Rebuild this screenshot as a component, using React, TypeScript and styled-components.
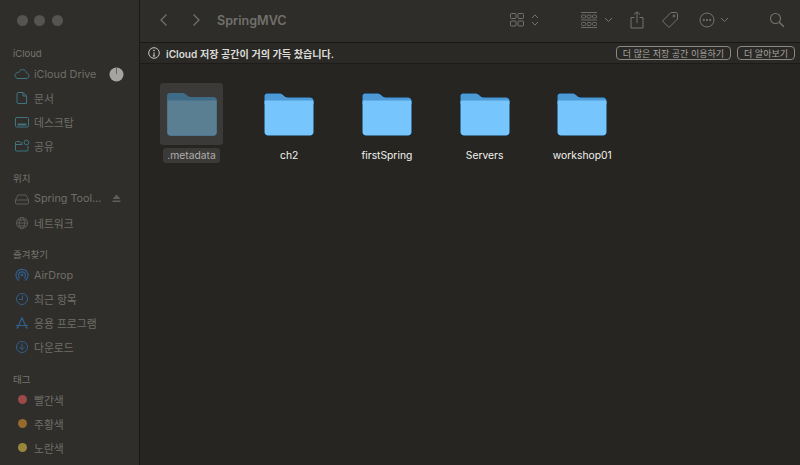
import * as React from 'react';
import styled, { createGlobalStyle } from 'styled-components';

const FONT = `Inter, "Noto Sans CJK KR", "Liberation Sans", sans-serif`;

const Global = createGlobalStyle`
  html, body { margin: 0; padding: 0; background: #262521; }
  body { font-family: ${FONT}; overflow: hidden; }
  * { box-sizing: border-box; }
`;

const Window = styled.div`
  display: flex;
  width: 800px;
  height: 465px;
  overflow: hidden;
  background: #262521;
`;

const Sidebar = styled.aside`
  width: 140px;
  flex-shrink: 0;
  height: 465px;
  background: #2f2e2b;
  border-right: 1px solid #191816;
  padding: 15px 0 0 13px;
  overflow: hidden;
`;

const Lights = styled.div`
  display: flex;
  gap: 6.5px;
  padding-left: 3.5px;
  margin-bottom: 21px;
`;

const Light = styled.span`
  width: 11px;
  height: 11px;
  border-radius: 50%;
  background: #555450;
`;

const Section = styled.section`
  margin-bottom: 13.6px;
`;

const SectionTitle = styled.div`
  height: 14px;
  line-height: 14px;
  font-size: 9.5px;
  font-weight: 400;
  color: #77766f;
  margin-bottom: 1px;
`;

const Row = styled.div`
  display: flex;
  align-items: center;
  height: 24px;
`;

const RowIcon = styled.span<{ $color?: string }>`
  width: 18px;
  margin-right: 3px;
  display: flex;
  justify-content: center;
  color: ${p => p.$color ?? '#3f7480'};
`;

const RowLabel = styled.span`
  font-size: 10.8px;
  color: #6f6e68;
  white-space: nowrap;
`;

const TagDot = styled.span<{ $color: string }>`
  width: 9px;
  height: 9px;
  border-radius: 50%;
  background: ${p => p.$color};
`;

const Trailing = styled.span<{ $right: number }>`
  margin-left: auto;
  margin-right: ${p => p.$right}px;
  display: flex;
`;

const Main = styled.main`
  flex: 1;
  display: flex;
  flex-direction: column;
  min-width: 0;
`;

const Toolbar = styled.header`
  display: flex;
  align-items: center;
  height: 43px;
  background: #2e2d2a;
  border-bottom: 1px solid #191816;
  padding: 0 14px 2px 19px;
  color: #74736d;
`;

const ToolGroup = styled.div<{ $left: number }>`
  display: flex;
  align-items: center;
  margin-left: ${p => p.$left}px;
`;

const Title = styled.h1`
  margin: 0 0 0 16px;
  width: 70px;
  font-size: 12.6px;
  font-weight: 600;
  color: #71706a;
  white-space: nowrap;
`;

const Notice = styled.div`
  display: flex;
  align-items: center;
  height: 21px;
  background: #2a2926;
  border-bottom: 1px solid #1d1c1a;
  padding: 0 5px 0 8px;
`;

const NoticeText = styled.span`
  margin-left: 6px;
  font-size: 10.1px;
  font-weight: 600;
  color: #dcdbd7;
  flex: 1;
  white-space: nowrap;
`;

const NoticeButton = styled.button`
  height: 14px;
  padding: 0 6px;
  margin-left: 6px;
  border: 1px solid #8a8983;
  border-radius: 4px;
  background: transparent;
  font-family: ${FONT};
  font-size: 9px;
  line-height: 11px;
  color: #a6a5a0;
  white-space: nowrap;
`;

const Files = styled.div`
  display: flex;
  gap: 34.7px;
  padding: 19px 0 0 20px;
  align-items: flex-start;
`;

const FileItem = styled.div`
  width: 63px;
  display: flex;
  flex-direction: column;
  align-items: center;
`;

const IconBox = styled.div<{ $selected?: boolean }>`
  width: 63px;
  height: 62px;
  display: flex;
  align-items: center;
  justify-content: center;
  padding-top: 1px;
  border-radius: 3px;
  background: ${p => (p.$selected ? '#3b3a38' : 'transparent')};
`;

const FileName = styled.div<{ $selected?: boolean }>`
  margin-top: 3px;
  padding: 0 4px;
  height: 15px;
  line-height: 15px;
  font-size: 10.3px;
  font-weight: 400;
  border-radius: 3px;
  white-space: nowrap;
  color: ${p => (p.$selected ? '#b0afaa' : '#f2f2ee')};
  background: ${p => (p.$selected ? '#3b3a38' : 'transparent')};
`;

const Folder = ({ dim }: { dim?: boolean }) => {
  const back = dim ? '#3f6b87' : '#4d9ad6';
  const front = dim ? '#5a7f92' : '#76c5fc';
  return (
    <svg width="52" height="45" viewBox="0 0 52 45">
      <path
        d="M4 1 H17 C20 1 21 5 25 5 H47 C49.500 5 51 6.500 51 9 V40 C51 42.500 49.500 44 47 44 H5 C2.500 44 1 42.500 1 40 V4 C1 2 2 1 4 1 Z"
        fill={dim ? back : '#0d2233'}
      />
      <path d="M4 1.500 H17 C20 1.500 21 5.500 25 5.500 H47 C49 5.500 50.500 7 50.500 9 V12 H1.500 V4 C1.500 2.500 2.500 1.500 4 1.500 Z" fill={back} />
      <path d="M1.500 9.500 C1.500 8.700 2 8.400 3 8.400 H49 C50 8.400 50.500 8.700 50.500 9.500 V40 C50.500 42 49 43.500 47 43.500 H5 C3 43.500 1.500 42 1.500 40 Z" fill={front} />
    </svg>
  );
};

const stroke = { fill: 'none', stroke: 'currentColor', strokeWidth: 1 } as const;

const Svg = ({ children }: { children: React.ReactNode }) => (
  <svg width={16} height={14} viewBox="0 0 16 14" {...stroke}>
    {children}
  </svg>
);

const icons: Record<string, React.ReactNode> = {
  cloud: <Svg><path d="M4 11.500 H12 C14 11.500 15 10.300 15 8.800 C15 7.300 14 6.200 12.600 6.200 C12.200 4 10.500 2.600 8.500 2.600 C6.700 2.600 5.300 3.700 4.800 5.300 C2.700 5.300 1 6.700 1 8.500 C1 10.200 2.300 11.500 4 11.500 Z" /></Svg>,
  doc: <Svg><path d="M4 1.500 H9 L12.500 5 V12.500 H4 C3.500 12.500 3 12 3 11.500 V2.500 C3 2 3.500 1.500 4 1.500 Z M9 1.500 V5 H12.500" /></Svg>,
  desktop: <Svg><rect x="1.500" y="2.500" width="13" height="9.500" rx="1.200" /><path d="M3.500 9.500 H12.500" strokeWidth="2" /></Svg>,
  shared: <Svg><path d="M9 4 H6.500 L5.500 2.500 H2.500 C1.800 2.500 1.500 3 1.500 3.500 V11 C1.500 11.700 2 12 2.500 12 H13 C13.700 12 14 11.600 14 11 V7" /><path d="M1.500 5.500 H8.500" /><circle cx="12.500" cy="3.500" r="2.300" /></Svg>,
  disk: <Svg><path d="M4 3 H12 L14.500 8 V11 C14.500 11.500 14 12 13.500 12 H2.500 C2 12 1.500 11.500 1.500 11 V8 Z M1.500 8 H14.500" /></Svg>,
  globe: <Svg><circle cx="8" cy="7" r="5.500" /><ellipse cx="8" cy="7" rx="2.500" ry="5.500" /><path d="M2.500 7 H13.500 M3.500 4 H12.500 M3.500 10 H12.500" /></Svg>,
  airdrop: <Svg><path d="M5 12.500 A6 6 0 1 1 11 12.500 M6 10.200 A3.500 3.500 0 1 1 10 10.200" strokeWidth="1.200" /><circle cx="8" cy="7" r="1" fill="currentColor" /></Svg>,
  clock: <Svg><circle cx="8" cy="7" r="5.500" /><path d="M8.500 3.500 V7.500 H5" /></Svg>,
  apps: <Svg><path d="M8 1.500 L4 11 M8 1.500 L12 11 M2 9.500 H14 M2.500 12.500 L4 11 M13.500 12.500 L12 11" strokeWidth="1.200" /></Svg>,
  download: <Svg><circle cx="8" cy="7" r="5.500" /><path d="M8 3.500 V9.500 M5.500 7.200 L8 9.700 L10.500 7.200" /></Svg>,
};

type Item = { label: string; icon?: string; color?: string; dot?: string; trailing?: React.ReactNode; right?: number };

const sections: { title: string; items: Item[] }[] = [
  {
    title: 'iCloud',
    items: [
      {
        label: 'iCloud Drive',
        icon: 'cloud',
        right: 15,
        trailing: (
          <svg width="15" height="15" viewBox="0 0 15 15">
            <circle cx="7.500" cy="7.500" r="7" fill="#a5a4a0" />
            <path d="M7.500 1 V7" stroke="#55544f" strokeWidth="0.800" />
          </svg>
        ),
      },
      { label: '문서', icon: 'doc' },
      { label: '데스크탑', icon: 'desktop' },
      { label: '공유', icon: 'shared' },
    ],
  },
  {
    title: '위치',
    items: [
      {
        label: 'Spring Tool...',
        icon: 'disk',
        color: '#5c5b56',
        right: 18,
        trailing: (
          <svg width="9" height="9" viewBox="0 0 9 9">
            <path d="M4.500 0.500 L8.500 5 H0.500 Z M0.500 6.500 H8.500 V8 H0.500 Z" fill="#5f5e59" />
          </svg>
        ),
      },
      { label: '네트워크', icon: 'globe', color: '#5c5b56' },
    ],
  },
  {
    title: '즐겨찾기',
    items: [
      { label: 'AirDrop', icon: 'airdrop', color: '#2f5f8c' },
      { label: '최근 항목', icon: 'clock', color: '#2f5f8c' },
      { label: '응용 프로그램', icon: 'apps', color: '#2f5f8c' },
      { label: '다운로드', icon: 'download', color: '#2f5f8c' },
    ],
  },
  {
    title: '태그',
    items: [
      { label: '빨간색', dot: '#9c4a47' },
      { label: '주황색', dot: '#96692f' },
      { label: '노란색', dot: '#98863a' },
    ],
  },
];

const files = ['.metadata', 'ch2', 'firstSpring', 'Servers', 'workshop01'];

export default function App() {
  return (
    <Window>
      <Global />
      <Sidebar>
        <Lights>
          <Light />
          <Light />
          <Light />
        </Lights>
        {sections.map(s => (
          <Section key={s.title}>
            <SectionTitle>{s.title}</SectionTitle>
            {s.items.map(item => (
              <Row key={item.label}>
                <RowIcon $color={item.color}>
                  {item.dot ? <TagDot $color={item.dot} /> : icons[item.icon!]}
                </RowIcon>
                <RowLabel>{item.label}</RowLabel>
                {item.trailing && <Trailing $right={item.right ?? 0}>{item.trailing}</Trailing>}
              </Row>
            ))}
          </Section>
        ))}
      </Sidebar>
      <Main>
        <Toolbar>
          <svg width="10" height="14" viewBox="0 0 10 14" fill="none" stroke="currentColor" strokeWidth="1.200">
            <path d="M7.500 1.500 L2 7 L7.500 12.500" />
          </svg>
          <ToolGroup $left={22}>
            <svg width="10" height="14" viewBox="0 0 10 14" fill="none" stroke="currentColor" strokeWidth="1.200">
              <path d="M2.500 1.500 L8 7 L2.500 12.500" />
            </svg>
          </ToolGroup>
          <Title>SpringMVC</Title>
          <ToolGroup $left={223}>
            <svg width="30" height="14" viewBox="0 0 30 14" fill="none" stroke="currentColor">
              <rect x="0.500" y="0.500" width="5.500" height="5" rx="0.800" />
              <rect x="8" y="0.500" width="5.500" height="5" rx="0.800" />
              <rect x="0.500" y="8" width="5.500" height="5" rx="0.800" />
              <rect x="8" y="8" width="5.500" height="5" rx="0.800" />
              <path d="M22 5 L25 1.800 L28 5 M22 9 L25 12.200 L28 9" />
            </svg>
          </ToolGroup>
          <ToolGroup $left={41}>
            <svg width="32" height="16" viewBox="0 0 32 16" fill="none" stroke="currentColor" strokeWidth="0.900">
              <path d="M0 0.500 H16 M0 8 H16 M0 15.500 H16" />
              <rect x="0.500" y="3" width="4" height="3" rx="1" />
              <rect x="6" y="3" width="4" height="3" rx="1" />
              <rect x="11.500" y="3" width="4" height="3" rx="1" />
              <rect x="0.500" y="10.500" width="4" height="3" rx="1" />
              <rect x="6" y="10.500" width="4" height="3" rx="1" />
              <rect x="11.500" y="10.500" width="4" height="3" rx="1" />
              <path d="M24 6 L27.500 9.500 L31 6" strokeWidth="1" />
            </svg>
          </ToolGroup>
          <ToolGroup $left={17}>
            <svg width="14" height="18" viewBox="0 0 14 18" fill="none" stroke="currentColor">
              <path d="M4.500 6.500 H1 V17 H13 V6.500 H9.500 M7 12 V1 M4 3.500 L7 0.800 L10 3.500" />
            </svg>
          </ToolGroup>
          <ToolGroup $left={17}>
            <svg width="18" height="18" viewBox="0 0 18 18" fill="none" stroke="currentColor">
              <path d="M10 1.500 H15 C16 1.500 16.500 2 16.500 3 V8 L8 16.500 L1.500 10 Z" />
              <circle cx="13" cy="5" r="1" />
            </svg>
          </ToolGroup>
          <ToolGroup $left={20}>
            <svg width="30" height="16" viewBox="0 0 30 16" fill="none" stroke="currentColor">
              <circle cx="8" cy="8" r="7" />
              <circle cx="4.800" cy="8" r="0.700" fill="currentColor" />
              <circle cx="8" cy="8" r="0.700" fill="currentColor" />
              <circle cx="11.200" cy="8" r="0.700" fill="currentColor" />
              <path d="M22 6 L25.500 9.500 L29 6" />
            </svg>
          </ToolGroup>
          <ToolGroup $left={40}>
            <svg width="16" height="16" viewBox="0 0 16 16" fill="none" stroke="currentColor" strokeWidth="1.100">
              <circle cx="6.500" cy="6.500" r="5" />
              <path d="M10.300 10.300 L14.800 14.800" strokeWidth="1.400" />
            </svg>
          </ToolGroup>
        </Toolbar>
        <Notice>
          <svg width="12" height="12" viewBox="0 0 12 12" fill="none" stroke="#c9c8c3">
            <circle cx="6" cy="6" r="5.300" />
            <path d="M6 5.300 V9 M4.800 9 H7.200" />
            <circle cx="6" cy="3.400" r="0.400" fill="#c9c8c3" />
          </svg>
          <NoticeText>iCloud 저장 공간이 거의 가득 찼습니다.</NoticeText>
          <NoticeButton>더 많은 저장 공간 이용하기</NoticeButton>
          <NoticeButton>더 알아보기</NoticeButton>
        </Notice>
        <Files>
          {files.map((name, i) => (
            <FileItem key={name}>
              <IconBox $selected={i === 0}>
                <Folder dim={i === 0} />
              </IconBox>
              <FileName $selected={i === 0}>{name}</FileName>
            </FileItem>
          ))}
        </Files>
      </Main>
    </Window>
  );
}
